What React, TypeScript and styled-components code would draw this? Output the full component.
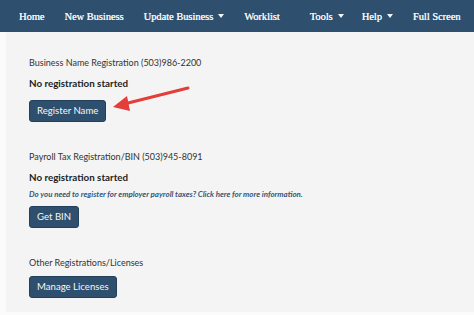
import React from "react";
import styled, { createGlobalStyle } from "styled-components";

const Global = createGlobalStyle`
  html, body { margin: 0; padding: 0; background: #fbfbfb; }
  body { width: 474px; height: 315px; overflow: hidden; }
`;

const Page = styled.div`
  display: flex;
  flex-direction: column;
  height: 315px;
`;

const NavBar = styled.nav`
  height: 32px;
  background: #2e4f6d;
  display: flex;
  align-items: center;
  font-family: "Liberation Serif", "Times New Roman", serif;
  font-size: 10.4px;
  font-weight: 400;
  color: #f3f5f7;
  text-shadow: 0.3px 0 0 #f3f5f7;
`;

const NavItem = styled.span<{ $ml: number }>`
  display: inline-flex;
  align-items: center;
  gap: 5px;
  white-space: nowrap;
  margin-left: ${(p) => p.$ml}px;
`;

const Caret = styled.span`
  width: 0;
  height: 0;
  border-left: 3px solid transparent;
  border-right: 3px solid transparent;
  border-top: 4px solid #f3f5f7;
`;

const Main = styled.main`
  position: relative;
  flex: 1;
  margin-left: 6px;
  margin-bottom: 3px;
  background: #f4f4f4;
  padding: 24px 0 0 23px;
  font-family: Lato, "Open Sans", sans-serif;
  color: #2a2a2a;
`;

const Section = styled.section<{ $gap: number }>`
  display: flex;
  flex-direction: column;
  align-items: flex-start;
  margin-bottom: ${(p) => p.$gap}px;
`;

const Label = styled.div`
  font-size: 9px;
  line-height: 14px;
  color: #333;
`;

const Status = styled.div`
  font-size: 9.8px;
  font-weight: 700;
  line-height: 16px;
  margin-top: 5px;
  color: #1e1e1e;
`;

const InfoLink = styled.a`
  font-size: 7.9px;
  font-style: italic;
  font-weight: 700;
  color: #34577a;
  line-height: 12px;
  margin-top: 3px;
  text-decoration: none;
`;

const Button = styled.button<{ $mt: number }>`
  margin-top: ${(p) => p.$mt}px;
  height: 22px;
  padding: 0 7px;
  background: #2e4f6d;
  color: #f5f7f9;
  border: 1px solid #23405a;
  border-radius: 3px;
  font-family: Lato, "Open Sans", sans-serif;
  font-size: 9.6px;
  line-height: 20px;
`;

const Arrow = styled.svg`
  position: absolute;
  left: 102px;
  top: 50px;
  overflow: visible;
`;

export default function App() {
  return (
    <Page>
      <Global />
      <NavBar>
        <NavItem $ml={19}>Home</NavItem>
        <NavItem $ml={20}>New Business</NavItem>
        <NavItem $ml={20}>
          Update Business <Caret />
        </NavItem>
        <NavItem $ml={20}>Worklist</NavItem>
        <NavItem $ml={30}>
          Tools <Caret />
        </NavItem>
        <NavItem $ml={18}>
          Help <Caret />
        </NavItem>
        <NavItem $ml={20}>Full Screen</NavItem>
      </NavBar>
      <Main>
        <Section $gap={28}>
          <Label>Business Name Registration (503)986-2200</Label>
          <Status>No registration started</Status>
          <Button $mt={9}>Register Name</Button>
        </Section>
        <Section $gap={28}>
          <Label>Payroll Tax Registration/BIN (503)945-8091</Label>
          <Status>No registration started</Status>
          <InfoLink>
            Do you need to register for employer payroll taxes? Click here for more information.
          </InfoLink>
          <Button $mt={6}>Get BIN</Button>
        </Section>
        <Section $gap={0}>
          <Label>Other Registrations/Licenses</Label>
          <Button $mt={6}>Manage Licenses</Button>
        </Section>
        <Arrow width="80" height="30" viewBox="0 0 80 30">
          <line x1="80" y1="6" x2="16" y2="22" stroke="#e43d3a" strokeWidth="3" strokeLinecap="round" />
          <polygon points="5,25 19,14 22,29" fill="#e43d3a" />
        </Arrow>
      </Main>
    </Page>
  );
}
